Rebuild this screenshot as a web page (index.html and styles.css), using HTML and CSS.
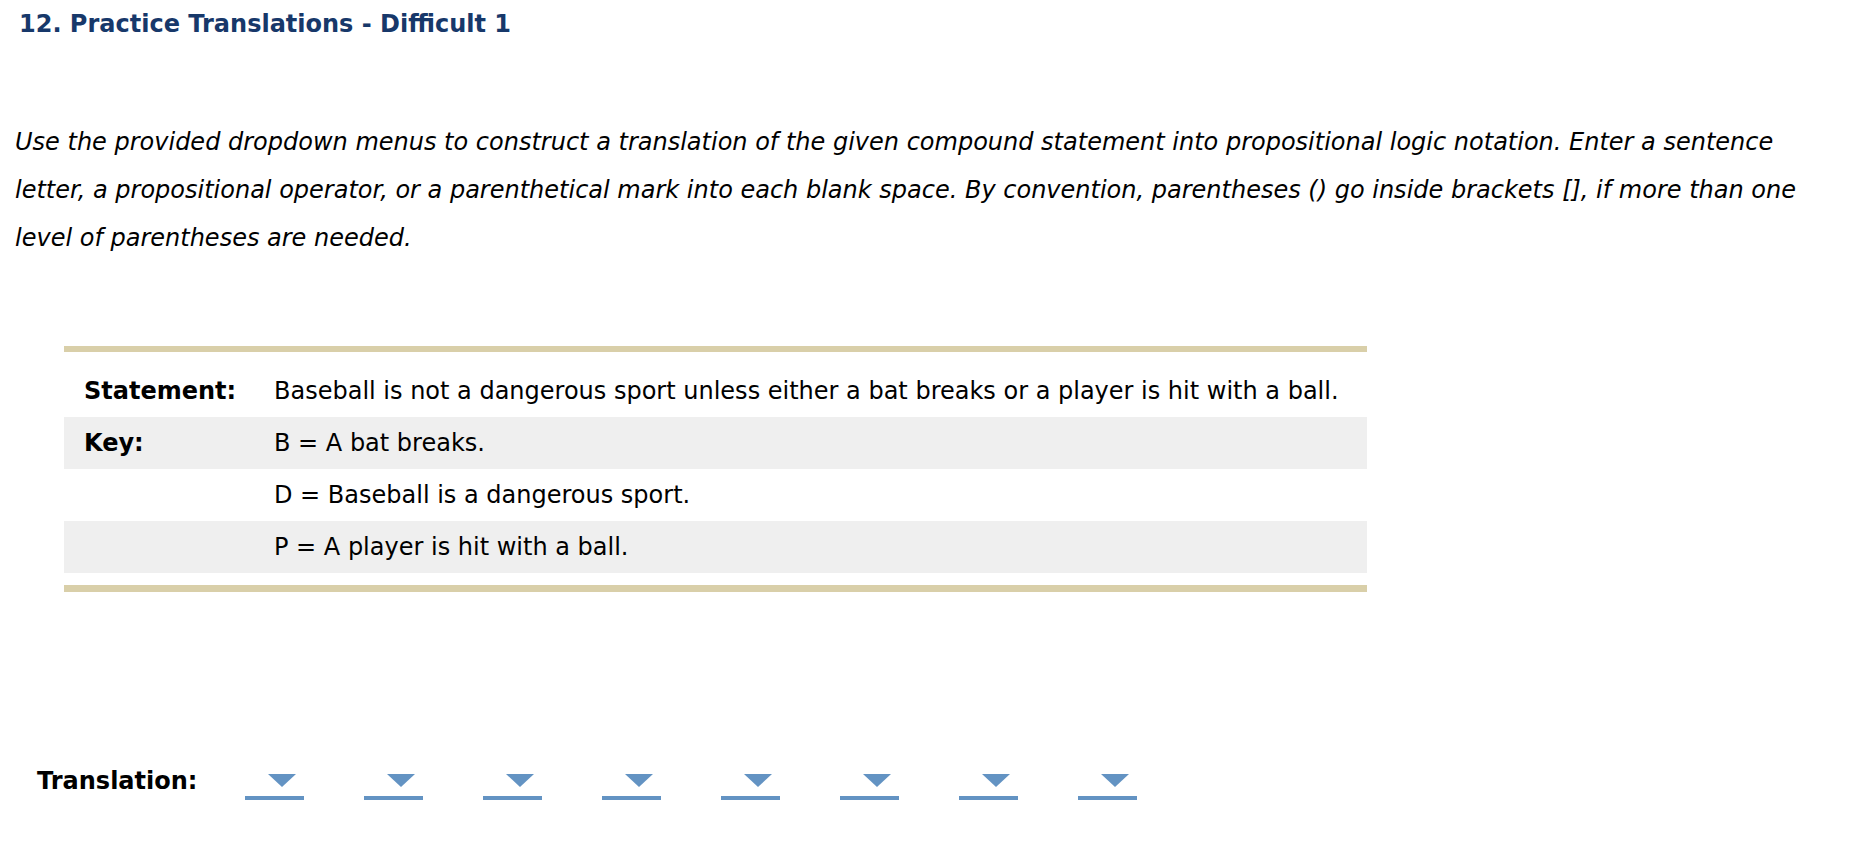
FILE: index.html
```html
<!DOCTYPE html>
<html lang="en">
<head>
<meta charset="utf-8">
<title>12. Practice Translations - Difficult 1</title>
<link rel="stylesheet" href="styles.css">
</head>
<body>
<h1 class="title">12. Practice Translations - Difficult 1</h1>
<p class="instructions">Use the provided dropdown menus to construct a translation of the given compound statement into propositional logic notation. Enter a sentence<br>letter, a propositional operator, or a parenthetical mark into each blank space. By convention, parentheses () go inside brackets [], if more than one<br>level of parentheses are needed.</p>

<div class="problem">
  <div class="row">
    <div class="label">Statement:</div>
    <div class="value">Baseball is not a dangerous sport unless either a bat breaks or a player is hit with a ball.</div>
  </div>
  <div class="row shaded">
    <div class="label">Key:</div>
    <div class="value">B = A bat breaks.</div>
  </div>
  <div class="row">
    <div class="label"></div>
    <div class="value">D = Baseball is a dangerous sport.</div>
  </div>
  <div class="row shaded">
    <div class="label"></div>
    <div class="value">P = A player is hit with a ball.</div>
  </div>
</div>

<div class="translation">
  <div class="translation-label">Translation:</div>
  <div class="blanks">
    <div class="blank"><span class="arrow"></span></div>
    <div class="blank"><span class="arrow"></span></div>
    <div class="blank"><span class="arrow"></span></div>
    <div class="blank"><span class="arrow"></span></div>
    <div class="blank"><span class="arrow"></span></div>
    <div class="blank"><span class="arrow"></span></div>
    <div class="blank"><span class="arrow"></span></div>
    <div class="blank"><span class="arrow"></span></div>
  </div>
</div>
</body>
</html>
```

FILE: styles.css
```css
html, body {
  margin: 0;
  padding: 0;
  background: #ffffff;
}

body {
  font-family: "DejaVu Sans", Verdana, sans-serif;
  color: #000;
}

.title {
  margin: 0;
  padding: 10px 0 0 19px;
  font-size: 24px;
  line-height: 28px;
  font-weight: bold;
  color: #17386a;
}

.instructions {
  margin: 80px 0 0 0;
  padding-left: 15px;
  font-size: 24px;
  line-height: 48px;
  font-style: italic;
  white-space: nowrap;
}

.problem {
  margin: 84px 0 0 64px;
  width: 1303px;
  border-top: 6px solid #d9cfa9;
  border-bottom: 7px solid #d9cfa9;
  padding: 13px 0 12px 0;
  box-sizing: border-box;
}

.row {
  display: flex;
  align-items: center;
  height: 52px;
  font-size: 24px;
}

.row.shaded {
  background: #efefef;
}

.label {
  width: 210px;
  padding-left: 20px;
  box-sizing: border-box;
  font-weight: bold;
}

.value {
  flex: 1;
}

.translation {
  display: flex;
  align-items: flex-start;
  margin: 175px 0 0 37px;
}

.translation-label {
  font-size: 24px;
  line-height: 28px;
  font-weight: bold;
  width: 208px;
}

.blanks {
  display: flex;
  gap: 60px;
  margin-top: 7px;
}

.blank {
  width: 59px;
  height: 26px;
  box-sizing: border-box;
  border-bottom: 4px solid #6393c3;
  display: flex;
  justify-content: flex-end;
  padding-right: 8px;
}

.arrow {
  width: 0;
  height: 0;
  border-left: 14px solid transparent;
  border-right: 14px solid transparent;
  border-top: 13px solid #6393c3;
}
```
